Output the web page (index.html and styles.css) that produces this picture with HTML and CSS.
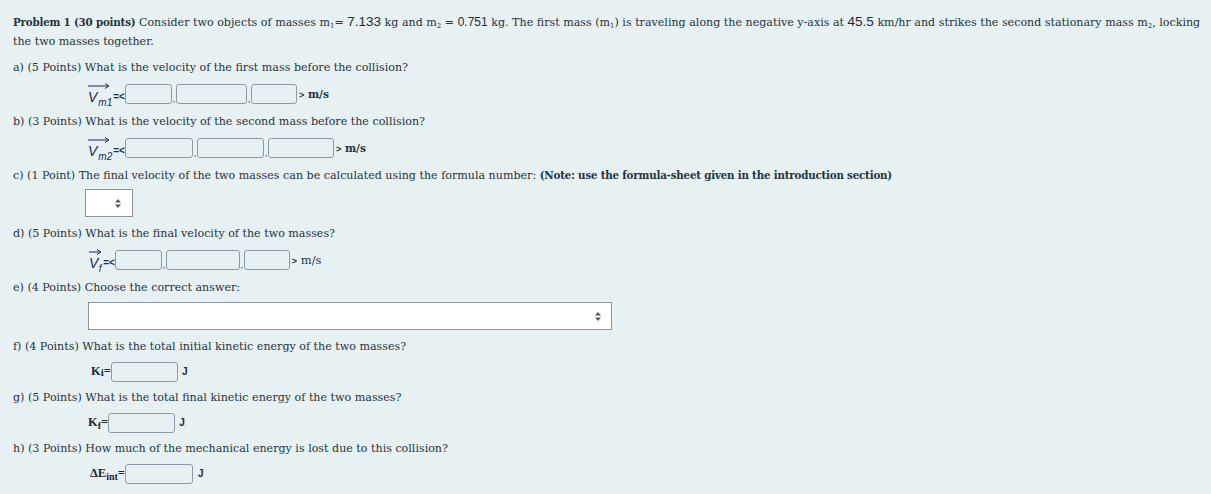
FILE: index.html
```html
<!DOCTYPE html>
<html>
<head>
<meta charset="utf-8">
<link rel="stylesheet" href="styles.css">
</head>
<body>
<div class="question">
  <p class="intro"><b class="tb">Problem 1 (30 points)</b> Consider two objects of masses m<sub>1</sub>= <span class="num">7.133</span> kg and m<sub>2</sub> = <span class="num small">0.751</span> kg. The first mass (m<sub>1</sub>) is traveling along the negative y-axis at <span class="num">45.5</span> km/hr and strikes the second stationary mass m<sub>2</sub>, locking<br>the two masses together.</p>

  <p class="qt">a) (5 Points) What is the velocity of the first mass before the collision?</p>
  <div class="vrow r1">
    <span class="vec"><svg class="arrow" width="22" height="6" viewBox="0 0 22 6"><path d="M0 3H20" stroke="#1b2a55" stroke-width="1"/><path d="M17 0.5L21 3L17 5.5" fill="none" stroke="#1b2a55" stroke-width="1"/></svg><span class="v">V</span><span class="sub">m1</span></span><span class="eq">=&lt;</span>
    <input class="in w47"><span class="comma">,</span><input class="in w71"><span class="comma">,</span><input class="in w46"><span class="unit bold"><span class="gt">&gt;</span> m/s</span>
  </div>

  <p class="qt">b) (3 Points) What is the velocity of the second mass before the collision?</p>
  <div class="vrow r2">
    <span class="vec"><svg class="arrow" width="22" height="6" viewBox="0 0 22 6"><path d="M0 3H20" stroke="#1b2a55" stroke-width="1"/><path d="M17 0.5L21 3L17 5.5" fill="none" stroke="#1b2a55" stroke-width="1"/></svg><span class="v">V</span><span class="sub">m2</span></span><span class="eq">=&lt;</span>
    <input class="in w68"><span class="comma">,</span><input class="in w67"><span class="comma">,</span><input class="in w66"><span class="unit bold"><span class="gt">&gt;</span> m/s</span>
  </div>

  <p class="qt">c) (1 Point) The final velocity of the two masses can be calculated using the formula number: <b class="tb">(Note: use the formula-sheet given in the introduction section)</b></p>
  <div class="selrow s1">
    <div class="selwrap small"><select class="sel"><option></option></select><svg class="updown" width="6" height="9" viewBox="0 0 6 9"><path d="M3 0L6 3.5H0Z M0 5.5H6L3 9Z" fill="#555"/></svg></div>
  </div>

  <p class="qt">d) (5 Points) What is the final velocity of the two masses?</p>
  <div class="vrow r3">
    <span class="vec vf"><svg class="arrow" width="13" height="6" viewBox="0 0 13 6"><path d="M0 3H11" stroke="#1b2a55" stroke-width="1"/><path d="M8 0.5L12 3L8 5.5" fill="none" stroke="#1b2a55" stroke-width="1"/></svg><span class="v">V</span><span class="sub">f</span></span><span class="eq">=&lt;</span>
    <input class="in w47"><span class="comma">,</span><input class="in w74"><span class="comma">,</span><input class="in w46"><span class="unit"><span class="gt">&gt;</span> m/s</span>
  </div>

  <p class="qt">e) (4 Points) Choose the correct answer:</p>
  <div class="selrow s2">
    <div class="selwrap wide"><select class="sel"><option></option></select><svg class="updown" width="6" height="9" viewBox="0 0 6 9"><path d="M3 0L6 3.5H0Z M0 5.5H6L3 9Z" fill="#555"/></svg></div>
  </div>

  <p class="qt">f) (4 Points) What is the total initial kinetic energy of the two masses?</p>
  <div class="erow e1">
    <span class="elabel">K<span class="esub">i</span>=</span><input class="in w67"><span class="joule">J</span>
  </div>

  <p class="qt">g) (5 Points) What is the total final kinetic energy of the two masses?</p>
  <div class="erow e2">
    <span class="elabel">K<sub>f</sub>=</span><input class="in w67"><span class="joule">J</span>
  </div>

  <p class="qt">h) (3 Points) How much of the mechanical energy is lost due to this collision?</p>
  <div class="erow e3">
    <span class="elabel">&Delta;E<sub>int</sub>=</span><input class="in w68"><span class="joule j5">J</span>
  </div>
</div>
</body>
</html>
```

FILE: styles.css
```css
html, body {
  margin: 0;
  background: #e7f1f4;
}
body {
  color: #26333c;
  font-family: "DejaVu Serif", serif;
  font-size: 11.1px;
}
.question {
  padding: 12px 13px 0;
}
p {
  margin: 0;
}
.tb {
  font-size: 10.3px;
  letter-spacing: -0.2px;
}
.intro {
  line-height: 19px;
  margin-bottom: 6.5px;
  white-space: nowrap;
}
.intro sub {
  font-size: 7px;
  vertical-align: -2px;
  line-height: 0;
}
.num {
  font-family: "Liberation Sans", Arial, sans-serif;
  font-size: 13.5px;
  color: #1f2930;
}
.num.small {
  font-size: 12px;
}
.qt {
  line-height: 19px;
  height: 19px;
  white-space: nowrap;
}
.vrow {
  height: 35px;
  display: flex;
  align-items: center;
}
.r1, .r2 { padding-left: 75px; }
.r3 { padding-left: 76px; }
.vec {
  position: relative;
  display: inline-flex;
  align-items: baseline;
  font-family: "Liberation Sans", Arial, sans-serif;
  font-style: italic;
  color: #1b2a55;
  margin-top: 6px;
}
.vec .v {
  font-size: 14px;
}
.vec .sub {
  font-size: 10px;
  position: relative;
  top: 4px;
  margin-left: 1px;
}
.vf .sub {
  margin-left: 0.5px;
}
.arrow {
  position: absolute;
  left: 0;
  top: -6px;
}
.eq {
  font-family: "Liberation Sans", Arial, sans-serif;
  font-size: 10px;
  font-weight: bold;
  color: #1b2a55;
  margin-top: 4px;
  margin-left: 1px;
}
.vf + .eq {
  margin-left: 1.5px;
}
.in {
  box-sizing: border-box;
  height: 20px;
  margin: 0;
  padding: 0;
  border: 1px solid #8e9ba6;
  border-radius: 3px;
  background: transparent;
  outline: none;
}
.w46 { width: 46px; }
.w47 { width: 47px; }
.w66 { width: 66px; }
.w67 { width: 67px; }
.w68 { width: 68px; }
.w71 { width: 71px; }
.w74 { width: 74px; }
.comma {
  width: 4px;
  text-align: center;
  font-family: "Liberation Sans", Arial, sans-serif;
  font-size: 9px;
  align-self: center;
  margin-top: 10px;
  color: #2d3b45;
}
.unit {
  margin-left: 2px;
  font-size: 11.5px;
}
.unit.bold {
  font-weight: bold;
  font-size: 10.6px;
}
.gt {
  font-family: "Liberation Sans", Arial, sans-serif;
  font-weight: bold;
  font-size: 9px;
}
.selrow.s1 {
  padding: 4.5px 0 6.5px 72px;
}
.selrow.s2 {
  padding: 5.5px 0 6.5px 75px;
}
.selwrap {
  position: relative;
  height: 28px;
}
.selwrap.small { width: 48px; }
.selwrap.wide { width: 524px; }
.sel {
  appearance: none;
  -webkit-appearance: none;
  width: 100%;
  height: 28px;
  box-sizing: border-box;
  margin: 0;
  border: 1px solid #8c949b;
  border-radius: 0;
  background: #ffffff;
  outline: none;
}
.updown {
  position: absolute;
  top: 10px;
}
.small .updown { right: 12px; }
.wide .updown { right: 11px; }
.erow {
  height: 32px;
  display: flex;
  align-items: center;
}
.e1 { padding-left: 78px; }
.e2 { padding-left: 75px; }
.e3 { padding-left: 77px; }
.elabel {
  font-family: "Liberation Serif", "Times New Roman", serif;
  font-weight: bold;
  font-size: 12.5px;
  color: #1f2930;
}
.elabel sub {
  font-size: 10px;
  vertical-align: -3px;
  line-height: 0;
}
.esub {
  font-size: 11px;
  position: relative;
  top: 1px;
}
.joule {
  font-family: "Liberation Sans", Arial, sans-serif;
  font-weight: bold;
  font-size: 10px;
  margin-left: 4px;
  color: #1f2930;
}
.joule.j5 { margin-left: 5px; }
```
